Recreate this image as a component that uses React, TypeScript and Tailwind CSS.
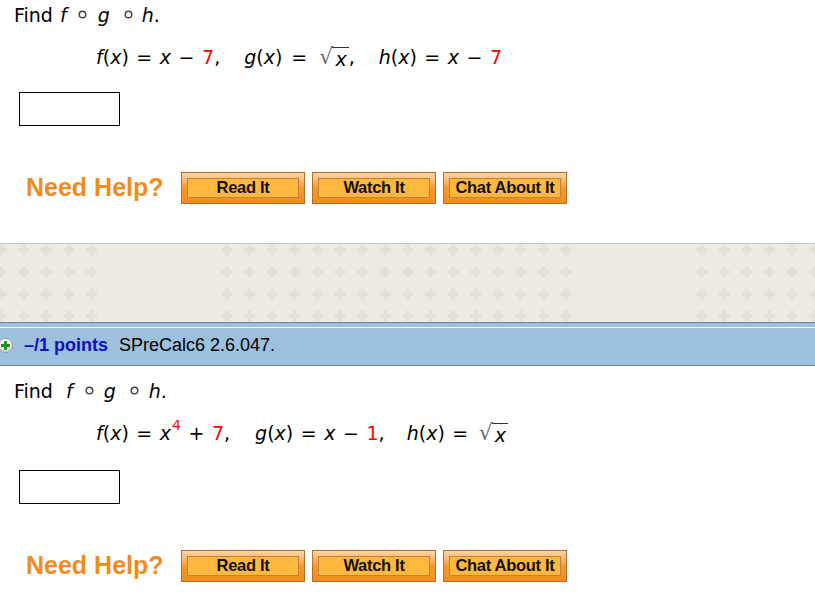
import React from 'react';

const mathFont = { fontFamily: '"DejaVu Sans", Verdana, sans-serif' };

function Ring({ className = '' }: { className?: string }) {
  return (
    <svg width="9" height="9" viewBox="0 0 9 9" className={`inline-block align-[3px] ${className}`}>
      <circle cx="4.5" cy="4.5" r="3.3" fill="#f4f4f4" stroke="#4a4a4a" strokeWidth="1.5" />
    </svg>
  );
}

function Sqrt({ children }: { children: React.ReactNode }) {
  return (
    <span className="inline-flex items-start ml-[3px]">
      <span className="text-[22px] leading-[26px] text-[#6a6a6a] -mr-[1px]">√</span>
      <span className="border-t border-[#333] mt-[3px] leading-[22px] pl-[3px] pr-[2px]">{children}</span>
    </span>
  );
}

function Red({ children }: { children: React.ReactNode }) {
  return <span className="text-[#f00]">{children}</span>;
}

function HelpButton({ label }: { label: string }) {
  return (
    <div className="w-[124px] h-[32px] border border-[#b3702a] bg-gradient-to-b from-[#fcd6a8] via-[#f59a2a] to-[#f28c1c] p-[5px]">
      <div className="h-full border border-[#c0823a] bg-[#fdb93f] flex items-center justify-center font-['Liberation_Sans',Arial,sans-serif] font-bold text-[16.5px] text-[#141008] tracking-[-0.3px]">
        {label}
      </div>
    </div>
  );
}

function HelpRow() {
  return (
    <div className="flex items-center">
      <span className="ml-[26px] w-[155px] font-['Liberation_Sans',Arial,sans-serif] font-bold text-[25px] text-[#f08c1e]">
        Need Help?
      </span>
      <div className="flex gap-[7px]">
        <HelpButton label="Read It" />
        <HelpButton label="Watch It" />
        <HelpButton label="Chat About It" />
      </div>
    </div>
  );
}

function PatternBand() {
  return (
    <div className="h-[79px] border-t border-[#c9c9c9] bg-[#eeebe4]">
      <svg width="815" height="78" className="block">
        <defs>
          <pattern id="plus" x="-10.3" y="-7" width="22.6" height="22" patternUnits="userSpaceOnUse">
            <path d="M9.3 7.5h4v3.5h3.5v4h-3.5v3.5h-4v-3.5h-3.5v-4h3.5z" fill="#e3e0d9" />
          </pattern>
        </defs>
        <rect width="815" height="78" fill="url(#plus)" />
        <rect x="102" width="114" height="78" fill="#eeebe4" />
        <rect x="581" width="110" height="78" fill="#eeebe4" />
      </svg>
    </div>
  );
}

function QuestionHeader() {
  return (
    <div className="h-[44px] border-y border-[#6b8294] bg-[#9cc0de] relative">
      <div className="absolute left-0 right-0 top-[4px] h-px bg-white/90" />
      <div className="h-full flex items-center pt-[2px] font-['Liberation_Sans',Arial,sans-serif] text-[18px]">
        <span className="-ml-[2px] w-[15px] h-[15px] rounded-full border border-[#9a9a9a] bg-gradient-to-b from-white to-[#d4d4d4] flex items-center justify-center">
          <svg width="9" height="9" viewBox="0 0 9 9">
            <path d="M3.1 0h2.8v3.1H9v2.8H5.9V9H3.1V5.9H0V3.1h3.1z" fill="#1c961c" />
          </svg>
        </span>
        <span className="ml-[11px] font-bold text-[#1010c0]">–/1 points</span>
        <span className="ml-[11px] text-black">SPreCalc6 2.6.047.</span>
      </div>
    </div>
  );
}

export default function App() {
  return (
    <div className="w-[815px] h-[598px] overflow-hidden bg-white text-black">
      {/* first question */}
      <section className="h-[243px] pt-[3px]" style={mathFont}>
        <p className="pl-[14px] text-[19px] leading-[24px]">
          Find <i className="ml-[1px]">f</i>
          <Ring className="ml-[11px] mr-[11px]" />
          <i>g</i>
          <Ring className="ml-[14px] mr-[9px]" />
          <i>h</i>.
        </p>
        <p className="pl-[96px] mt-[17px] text-[19px] leading-[26px] flex items-start whitespace-pre">
          <span className="[word-spacing:1.5px]">
            <i>f</i>(<i>x</i>) = <i>x</i> − <Red>7</Red>,
          </span>
          <span className="ml-[24px] inline-flex items-start [word-spacing:3px]">
            <i>g</i>(<i>x</i>) ={' '}
            <Sqrt>
              <i>x</i>
            </Sqrt>
            ,
          </span>
          <span className="ml-[24px] [word-spacing:1.5px]">
            <i>h</i>(<i>x</i>) = <i>x</i> − <Red>7</Red>
          </span>
        </p>
        <div className="ml-[19px] mt-[22px] w-[101px] h-[34px] border border-black" />
        <div className="mt-[43px]">
          <HelpRow />
        </div>
      </section>

      <PatternBand />
      <QuestionHeader />

      {/* second question */}
      <section className="pt-[13px]" style={mathFont}>
        <p className="pl-[14px] text-[19px] leading-[24px]">
          Find <i className="ml-[7px]">f</i>
          <Ring className="ml-[12px] mr-[10px]" />
          <i>g</i>
          <Ring className="ml-[14px] mr-[10px]" />
          <i>h</i>.
        </p>
        <p className="pl-[96px] mt-[17px] text-[19px] leading-[26px] flex items-start [word-spacing:1.5px] whitespace-pre">
          <span>
            <i>f</i>(<i>x</i>) = <i>x</i>
            <sup className="text-[#f00] text-[14px] not-italic -top-[0.75em] ml-[1px]">4</sup> + <Red>7</Red>,
          </span>
          <span className="ml-[25px]">
            <i>g</i>(<i>x</i>) = <i>x</i> − <Red>1</Red>,
          </span>
          <span className="ml-[22px] inline-flex items-start">
            <i>h</i>(<i>x</i>) ={' '}
            <Sqrt>
              <i>x</i>
            </Sqrt>
          </span>
        </p>
        <div className="ml-[19px] mt-[24px] w-[101px] h-[34px] border border-black" />
        <div className="mt-[43px]">
          <HelpRow />
        </div>
      </section>
    </div>
  );
}
